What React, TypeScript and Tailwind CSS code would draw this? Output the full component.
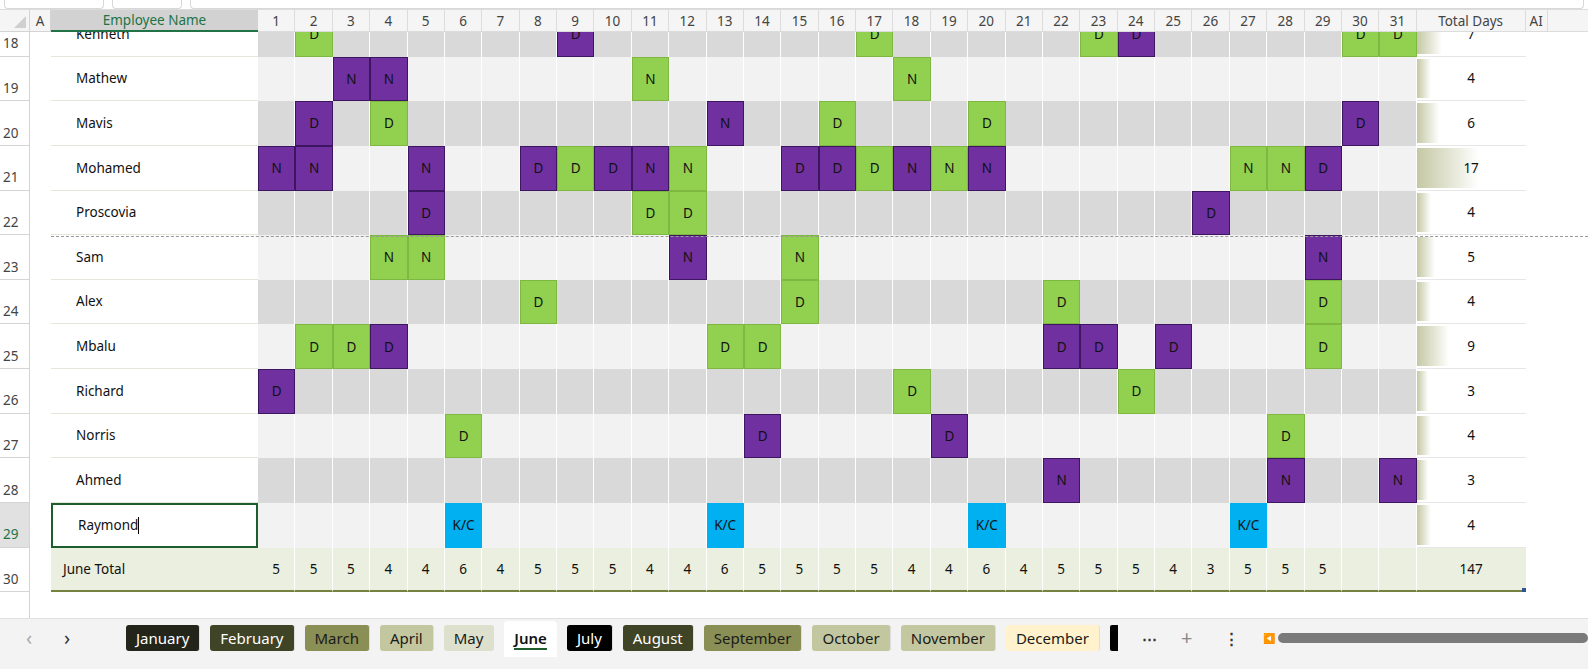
import React from "react";

type C = [number, string, string];
const rows: { n: number; name: string; cells: C[]; total: number }[] = [
  { n: 18, name: "Kenneth", total: 7, cells: [[2,"D","g"],[9,"D","p"],[17,"D","g"],[23,"D","g"],[24,"D","p"],[30,"D","g"],[31,"D","g"]] },
  { n: 19, name: "Mathew", total: 4, cells: [[3,"N","p"],[4,"N","p"],[11,"N","g"],[18,"N","g"]] },
  { n: 20, name: "Mavis", total: 6, cells: [[2,"D","p"],[4,"D","g"],[13,"N","p"],[16,"D","g"],[20,"D","g"],[30,"D","p"]] },
  { n: 21, name: "Mohamed", total: 17, cells: [[1,"N","p"],[2,"N","p"],[5,"N","p"],[8,"D","p"],[9,"D","g"],[10,"D","p"],[11,"N","p"],[12,"N","g"],[15,"D","p"],[16,"D","p"],[17,"D","g"],[18,"N","p"],[19,"N","g"],[20,"N","p"],[27,"N","g"],[28,"N","g"],[29,"D","p"]] },
  { n: 22, name: "Proscovia", total: 4, cells: [[5,"D","p"],[11,"D","g"],[12,"D","g"],[26,"D","p"]] },
  { n: 23, name: "Sam", total: 5, cells: [[4,"N","g"],[5,"N","g"],[12,"N","p"],[15,"N","g"],[29,"N","p"]] },
  { n: 24, name: "Alex", total: 4, cells: [[8,"D","g"],[15,"D","g"],[22,"D","g"],[29,"D","g"]] },
  { n: 25, name: "Mbalu", total: 9, cells: [[2,"D","g"],[3,"D","g"],[4,"D","p"],[13,"D","g"],[14,"D","g"],[22,"D","p"],[23,"D","p"],[25,"D","p"],[29,"D","g"]] },
  { n: 26, name: "Richard", total: 3, cells: [[1,"D","p"],[18,"D","g"],[24,"D","g"]] },
  { n: 27, name: "Norris", total: 4, cells: [[6,"D","g"],[14,"D","p"],[19,"D","p"],[28,"D","g"]] },
  { n: 28, name: "Ahmed", total: 3, cells: [[22,"N","p"],[28,"N","p"],[31,"N","p"]] },
  { n: 29, name: "Raymond", total: 4, cells: [[6,"K/C","b"],[13,"K/C","b"],[20,"K/C","b"],[27,"K/C","b"]] },
];
const totals = [5,5,5,4,4,6,4,5,5,5,4,4,6,5,5,5,5,4,4,6,4,5,5,5,4,3,5,5,5,null,null];
const days = Array.from({ length: 31 }, (_, i) => i + 1);
const cols = "grid grid-cols-[30px_21px_207px_repeat(31,37.39px)_109px_22px_1fr]";

const tabs: [string, string][] = [
  ["January", "bg-[#23251a] text-white"],
  ["February", "bg-[#3f4426] text-white"],
  ["March", "bg-[#8a8f55] text-[#1a1a1a]"],
  ["April", "bg-[#c2c7a0] text-[#1a1a1a]"],
  ["May", "bg-[#dde0cc] text-[#1a1a1a]"],
  ["June", ""],
  ["July", "bg-black text-white"],
  ["August", "bg-[#3f4426] text-white"],
  ["September", "bg-[#8a8f55] text-[#1a1a1a]"],
  ["October", "bg-[#c2c7a0] text-[#1a1a1a]"],
  ["November", "bg-[#c4c8a0] text-[#1a1a1a]"],
  ["December", "bg-[#fff2cc] text-[#1a1a1a]"],
];

function Row({ r, first }: { r: (typeof rows)[0]; first?: boolean }) {
  const gray = r.n % 2 === 0;
  const map = new Map(r.cells.map((c) => [c[0], c]));
  const sel = r.n === 29;
  return (
    <div className={`${cols} h-[44.64px] ${first ? "-mt-[19px]" : ""}`}>
      <div className={`border-r border-b border-[#d4d4d4] flex items-end justify-start pl-[3px] pb-[2px] text-[13.5px] ${sel ? "bg-[#e1e1e1] text-[#217346]" : "bg-white text-[#444]"}`}>{r.n}</div>
      <div className="bg-white" />
      <div className={`bg-white flex items-center pl-[25px] text-[13.5px] text-[#111] ${sel ? "border-2 border-[#1e5e2e]" : "border-b border-[#e6e6d8]"}`}>
        {r.name}{sel && <span className="inline-block w-px h-[17px] bg-black" />}
      </div>
      {days.map((d) => {
        const c = map.get(d);
        const bg = c ? (c[2] === "g" ? "bg-[#92d050] border border-[#7fb840]" : c[2] === "p" ? "bg-[#7030a0] border border-[#3c1660]" : "bg-[#00b0f0]") : gray ? "bg-[#d9d9d9] border-r border-white" : "bg-[#f2f2f2] border-r border-white";
        return (
          <div key={d} className={`${bg} flex items-center justify-center text-[13.5px] text-[#111]`}>{c ? c[1] : ""}</div>
        );
      })}
      <div className="bg-white border-b border-[#e6e6e6] relative flex items-center justify-center text-[13.5px] text-[#111]">
        <div className="absolute left-0 top-[2px] bottom-[2px] bg-gradient-to-r from-[#c5c8a4] to-white" style={{ width: r.total * 3.65 }} />
        <span className="relative">{r.total}</span>
      </div>
      <div className="bg-white" />
      <div className="bg-white" />
    </div>
  );
}

export default function App() {
  return (
    <div className="fixed inset-0 overflow-hidden bg-white font-['Open_Sans',sans-serif] flex flex-col">
      <div className="h-[10px] shrink-0 border-b border-[#dcdcdc] bg-white flex gap-[8px] px-[4px]">
        <div className="w-[100px] border border-t-0 border-[#d8d8d8] rounded-b" />
        <div className="w-[70px] border border-t-0 border-[#d8d8d8] rounded-b" />
        <div className="flex-1 border border-t-0 border-[#d8d8d8] rounded-b" />
      </div>
      <div className={`${cols} h-[21px] shrink-0 bg-[#f5f5f5] text-[13.5px] text-[#444] z-10`}>
        <div className="border-r border-b border-[#d4d4d4] relative"><div className="absolute right-[3px] bottom-[3px] w-0 h-0 border-l-[12px] border-l-transparent border-b-[12px] border-b-[#d0d0d0]" /></div>
        <div className="border-r border-b border-[#d4d4d4] flex items-center justify-center">A</div>
        <div className="bg-[#d2d2d2] border-b-2 border-[#217346] flex items-center justify-center text-[#217346]">Employee Name</div>
        {days.map((d) => (
          <div key={d} className="border-r border-b border-[#dcdcdc] flex items-center justify-center">{d}</div>
        ))}
        <div className="border-r border-b border-[#dcdcdc] flex items-center justify-center">Total Days</div>
        <div className="border-r border-b border-[#dcdcdc] flex items-center justify-center">AI</div>
        <div className="border-b border-[#dcdcdc]" />
      </div>
      <div className="relative overflow-hidden h-[587px] shrink-0">
        {rows.map((r, i) => (
          <Row key={r.n} r={r} first={i === 0} />
        ))}
        <div className={`${cols} h-[44.64px]`}>
          <div className="bg-white border-r border-b border-[#d4d4d4] flex items-end pl-[3px] pb-[2px] text-[13.5px] text-[#444]">30</div>
          <div className="bg-white" />
          <div className="bg-[#ebefdf] border-b-2 border-[#76803f] flex items-center pl-[12px] text-[13.5px] text-[#111]">June Total</div>
          {totals.map((t, i) => (
            <div key={i} className="bg-[#ebefdf] border-r border-white border-b-2 border-b-[#76803f] flex items-center justify-center text-[13.5px] text-[#111]">{t ?? ""}</div>
          ))}
          <div className="bg-[#ebefdf] border-b-2 border-[#76803f] flex items-center justify-center text-[13.5px] text-[#111] relative">147<div className="absolute right-0 bottom-[-2px] w-[4px] h-[4px] bg-[#2f5597]" /></div>
          <div className="bg-white" />
          <div className="bg-white" />
        </div>
        <div className={`${cols} h-[40px]`}>
          <div className="bg-white border-r border-[#d4d4d4]" />
        </div>
        <div className="absolute left-[51px] right-0 top-[205px] border-t border-dashed border-[#999]" />
      </div>
      <div className="h-[39px] shrink-0 bg-[#f3f3f3] border-t border-[#e0e0e0] flex items-center text-[15px]">
        <span className="w-[64px] pl-[26px] text-[#aaa] text-[20px]">‹</span>
        <span className="w-[62px] text-[#333] text-[20px]">›</span>
        <div className="flex items-center gap-[10px]">
          {tabs.map(([t, c]) =>
            t === "June" ? (
              <div key={t} className="h-[37px] mt-[2px] px-[10px] bg-white rounded-t flex items-center justify-center font-semibold text-[#111]">
                <span className="border-b-2 border-[#1e5e2e] leading-[20px]">June</span>
              </div>
            ) : (
              <div key={t} className={`h-[26px] px-[10px] rounded-[3px] flex items-center ${c} border-r border-[#ddd]`}>{t}</div>
            )
          )}
          <div className="w-[8px] h-[26px] bg-black rounded-l-[2px]" />
          <span className="ml-[14px] font-bold text-[#333]">⋯</span>
          <span className="ml-[14px] text-[#888] text-[20px]">+</span>
          <span className="ml-[22px] text-[#333] font-bold">⋮</span>
          <span className="ml-[14px] text-[#444] text-[10px]">◀</span>
        </div>
        <div className="flex-1 h-[10px] rounded-full bg-[#7a7a7a] ml-[2px]" />
      </div>
      <div className="flex-1 bg-[#f3f3f3]" />
    </div>
  );
}
